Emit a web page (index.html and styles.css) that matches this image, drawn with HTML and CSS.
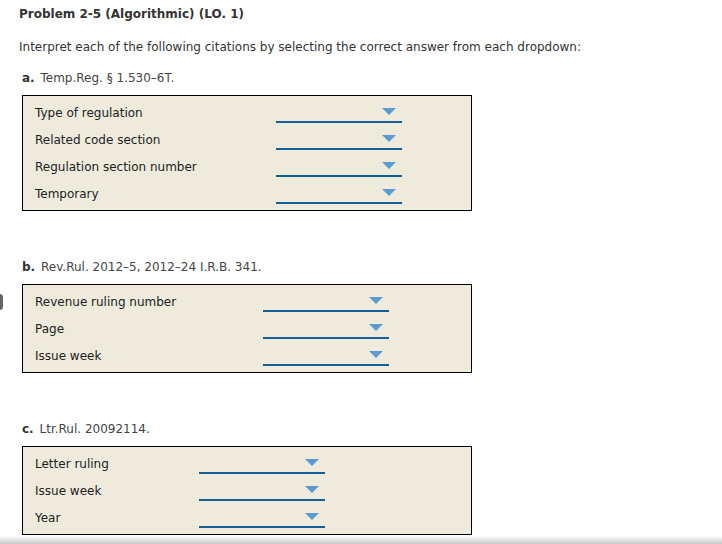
FILE: index.html
```html
<html lang="en">
<head>
    <title>Problem 2-5</title>
    <meta charset="utf-8">
    <link rel="stylesheet" href="styles.css">
</head>

<body>
    <div id='problem'>
        <div class='title'>Problem 2-5 (Algorithmic) (LO. 1)</div>
        <div class='intro'>Interpret each of the following citations by selecting the correct answer from each dropdown:</div>

        <div class='part'><b>a.</b> Temp.Reg. § 1.530–6T.</div>
        <div class='choices'>
            <div class='row'><div class='label wide'>Type of regulation</div><div class='dropdown'></div></div>
            <div class='row'><div class='label wide'>Related code section</div><div class='dropdown'></div></div>
            <div class='row'><div class='label wide'>Regulation section number</div><div class='dropdown'></div></div>
            <div class='row'><div class='label wide'>Temporary</div><div class='dropdown'></div></div>
        </div>

        <div class='part'><b>b.</b> Rev.Rul. 2012–5, 2012–24 I.R.B. 341.</div>
        <div class='choices'>
            <div class='row'><div class='label mid'>Revenue ruling number</div><div class='dropdown'></div></div>
            <div class='row'><div class='label mid'>Page</div><div class='dropdown'></div></div>
            <div class='row'><div class='label mid'>Issue week</div><div class='dropdown'></div></div>
        </div>

        <div class='part'><b>c.</b> Ltr.Rul. 20092114.</div>
        <div class='choices'>
            <div class='row'><div class='label narrow'>Letter ruling</div><div class='dropdown'></div></div>
            <div class='row'><div class='label narrow'>Issue week</div><div class='dropdown'></div></div>
            <div class='row'><div class='label narrow'>Year</div><div class='dropdown'></div></div>
        </div>
    </div>
    <div id='edge'></div>
    <div id='shade'></div>
</body>

</html>
```

FILE: styles.css
```css
body {
    background-color: white;
    margin: 0px;
    padding: 0px;
    font-family: "DejaVu Sans", Verdana, sans-serif;
    font-size: 12px;
    color: #333;
    overflow: hidden;
}

#problem {
    padding: 4px 0 0 19px;
    line-height: 20px;
}

.title {
    font-weight: bold;
}

.intro {
    margin-top: 13px;
}

.part {
    margin: 11px 0 7px 3px;
    color: #444;
}

.part + .choices + .part {
    margin-top: 46px;
}

.part b {
    color: #333;
    margin-right: 2px;
}

.choices {
    width: 424px;
    margin-left: 3px;
    padding: 4px 12px 2px 12px;
    background-color: #eeebdc;
    border: 1px solid black;
}

.row {
    display: flex;
    height: 27px;
}

.label {
    line-height: 26px;
    color: #222;
}

.label.wide {
    width: 241px;
}

.label.mid {
    width: 228px;
}

.label.narrow {
    width: 164px;
}

.dropdown {
    width: 126px;
    height: 21px;
    border-bottom: 2px solid #12609a;
    position: relative;
}

.dropdown:after {
    content: '';
    position: absolute;
    top: 8px;
    right: 6px;
    border-left: 7px solid transparent;
    border-right: 7px solid transparent;
    border-top: 7px solid #5b9bd1;
}

#edge {
    position: absolute;
    left: -4px;
    top: 294px;
    width: 7px;
    height: 16px;
    border-radius: 4px;
    background-color: #666;
}

#shade {
    position: fixed;
    left: 0;
    right: 0;
    bottom: 0;
    height: 8px;
    background: linear-gradient(white, #c8c8c8);
}
```
